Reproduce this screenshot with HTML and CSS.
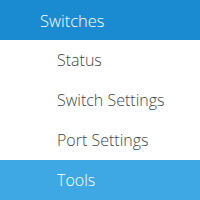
FILE: index.html
```html
<!DOCTYPE html>
<html>
<head>
<meta charset="utf-8">
<link rel="stylesheet" href="styles.css">
</head>
<body>
<nav class="menu">
  <div class="item head">Switches</div>
  <div class="item sub">Status</div>
  <div class="item sub">Switch Settings</div>
  <div class="item sub">Port Settings</div>
  <div class="item sub active">Tools</div>
</nav>
</body>
</html>
```
FILE: styles.css
```css
html, body {
  margin: 0;
  padding: 0;
  background: #ffffff;
}
.menu {
  width: 200px;
  font-family: "Open Sans", sans-serif;
  font-size: 16px;
  font-weight: 300;
}
.item {
  height: 40px;
  display: flex;
  align-items: center;
  color: #444444;
}
.head {
  background: #1b8bd1;
  color: #ffffff;
  padding-left: 40px;
  font-size: 16.5px;
}
.sub {
  padding-left: 57px;
}
.active {
  background: #3ea8e5;
  color: #ffffff;
}
```
